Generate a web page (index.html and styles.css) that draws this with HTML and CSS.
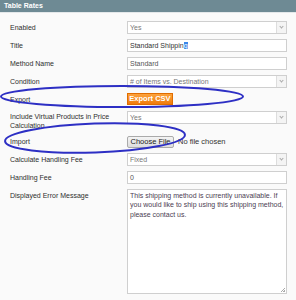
FILE: index.html
```html
<!DOCTYPE html>
<html lang="en">
<head>
  <meta charset="UTF-8">
  <title>Table Rates</title>
  <link rel="stylesheet" href="styles.css">
</head>
<body>
  <div class="section">
    <div class="section-head">Table Rates</div>

    <div class="form">
      <div class="label">Enabled</div>
      <div class="field"><div class="select">Yes</div></div>

      <div class="label">Title</div>
      <div class="field"><div class="input dark">Standard Shippin<span class="sel">g</span></div></div>

      <div class="label">Method Name</div>
      <div class="field"><div class="input">Standard</div></div>

      <div class="label">Condition</div>
      <div class="field"><div class="select"># of Items vs. Destination</div></div>

      <div class="label">Export</div>
      <div class="field"><button class="btn-export">Export CSV</button></div>

      <div class="label wrap">Include Virtual Products in Price Calculation</div>
      <div class="field"><div class="select">Yes</div></div>

      <div class="label">Import</div>
      <div class="field file">
        <button class="btn-file">Choose File</button>
        <span class="file-name">No file chosen</span>
      </div>

      <div class="label">Calculate Handling Fee</div>
      <div class="field"><div class="select">Fixed</div></div>

      <div class="label">Handling Fee</div>
      <div class="field"><div class="input">0</div></div>

      <div class="label">Displayed Error Message</div>
      <div class="field"><div class="textarea">This shipping method is currently unavailable. If you would like to ship using this shipping method, please contact us.</div></div>
    </div>
  </div>

  <!-- hand drawn marks over the form -->
  <svg class="marks" width="296" height="300" viewBox="0 0 296 300">
    <ellipse cx="122" cy="96.5" rx="121" ry="10.5" />
    <ellipse cx="95" cy="138" rx="90" ry="14.5" transform="rotate(-2 95 138)" />
  </svg>
</body>
</html>
```

FILE: styles.css
```css
body {
  margin: 0;
  background-color: #fafafa;
  font-family: "Liberation Sans", Arial, sans-serif;
  font-size: 7px;
  color: #333;
  width: 296px;
  height: 300px;
  overflow: hidden;
  position: relative;
}
.section-head {
  background-color: #6e8a94;
  color: #fff;
  font-weight: bold;
  height: 12px;
  line-height: 12px;
  padding-left: 4px;
  border-bottom: 1px solid #e4e8ea;
}
.form {
  display: grid;
  grid-template-columns: 117px 160px;
  row-gap: 5px;
  padding: 8px 0 0 10px;
}
.label {
  line-height: 9px;
  padding-top: 2px;
  color: #2e2e2e;
}
.label.wrap {
  padding-right: 4px;
  padding-top: 1px;
}
.field {
  min-height: 13px;
}
.select,
.input {
  box-sizing: border-box;
  height: 13px;
  line-height: 11px;
  border: 1px solid #cfcfcf;
  background-color: #fff;
  padding-left: 2px;
  color: #777;
  position: relative;
}
.input {
  color: #555;
}
.input.dark {
  color: #333;
}
.select::after {
  content: "";
  position: absolute;
  right: 0;
  top: 0;
  width: 9px;
  height: 11px;
  border-left: 1px solid #ddd;
  background-color: #f4f4f4;
}
.select::before {
  content: "";
  position: absolute;
  right: 3px;
  top: 3px;
  width: 2px;
  height: 2px;
  border-right: 1px solid #aaa;
  border-bottom: 1px solid #aaa;
  transform: rotate(45deg);
  z-index: 1;
}
.sel {
  background-color: #3a86e8;
  color: #fff;
}
.btn-export {
  display: block;
  width: 46px;
  height: 12px;
  margin: 0;
  padding: 0;
  border: 1px solid #e06c00;
  background: linear-gradient(#fca23c, #f07c0c);
  color: #fff;
  font-family: "Liberation Sans", Arial, sans-serif;
  font-size: 7.5px;
  font-weight: bold;
  line-height: 10px;
}
.field.file {
  display: flex;
  align-items: center;
  gap: 4px;
}
.btn-file {
  width: 47px;
  height: 12px;
  margin: 0;
  padding: 0;
  border: 1px solid #aaa;
  border-radius: 2px;
  background: linear-gradient(#f4f4f4, #dedede);
  color: #222;
  font-family: "Liberation Sans", Arial, sans-serif;
  font-size: 7.5px;
  line-height: 10px;
}
.file-name {
  font-size: 7.5px;
  color: #333;
}
.textarea {
  box-sizing: border-box;
  height: 105px;
  border: 1px solid #cfcfcf;
  background-color: #fff;
  padding: 1px 2px;
  line-height: 9.4px;
  color: #4b4052;
  position: relative;
}
.textarea::after {
  content: "";
  position: absolute;
  right: 1px;
  bottom: 1px;
  width: 4px;
  height: 4px;
  background: linear-gradient(135deg, transparent 45%, #aaa 45%, #aaa 55%, transparent 55%, transparent 75%, #aaa 75%);
}
.marks {
  position: absolute;
  left: 0;
  top: 0;
}
.marks ellipse {
  fill: none;
  stroke: #2d2fc4;
  stroke-width: 2;
}
```
